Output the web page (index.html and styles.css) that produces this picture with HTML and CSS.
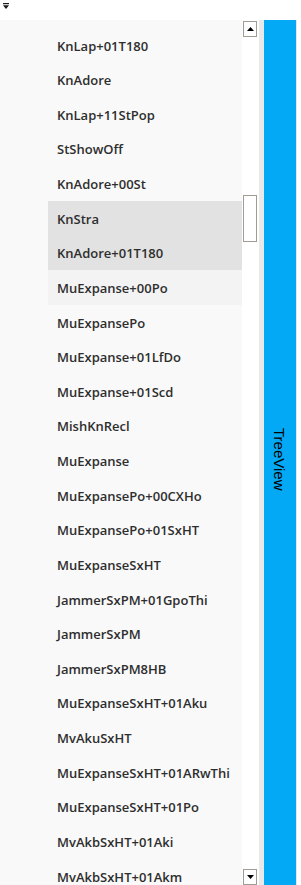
FILE: index.html
```html
<!DOCTYPE html>
<html>
<head>
<meta charset="utf-8">
<link rel="stylesheet" href="styles.css">
</head>
<body>
<div class="topbar">
  <svg class="menu-icon" width="8" height="8" viewBox="0 0 8 8"><rect x="0" y="0" width="6" height="1.2" fill="#1a1a1a"/><polygon points="0,2.2 6,2.2 3,6" fill="#1a1a1a"/></svg>
</div>
<div class="main">
  <div class="list">
    <div class="item">KnLap+01T180</div>
    <div class="item">KnAdore</div>
    <div class="item">KnLap+11StPop</div>
    <div class="item">StShowOff</div>
    <div class="item">KnAdore+00St</div>
    <div class="item selected">KnStra</div>
    <div class="item selected">KnAdore+01T180</div>
    <div class="item hover">MuExpanse+00Po</div>
    <div class="item">MuExpansePo</div>
    <div class="item">MuExpanse+01LfDo</div>
    <div class="item">MuExpanse+01Scd</div>
    <div class="item">MishKnRecl</div>
    <div class="item">MuExpanse</div>
    <div class="item">MuExpansePo+00CXHo</div>
    <div class="item">MuExpansePo+01SxHT</div>
    <div class="item">MuExpanseSxHT</div>
    <div class="item">JammerSxPM+01GpoThi</div>
    <div class="item">JammerSxPM</div>
    <div class="item">JammerSxPM8HB</div>
    <div class="item">MuExpanseSxHT+01Aku</div>
    <div class="item">MvAkuSxHT</div>
    <div class="item">MuExpanseSxHT+01ARwThi</div>
    <div class="item">MuExpanseSxHT+01Po</div>
    <div class="item">MvAkbSxHT+01Aki</div>
    <div class="item">MvAkbSxHT+01Akm</div>
  </div>
  <div class="scrollbar">
    <div class="sb-btn"><svg width="7" height="4" viewBox="0 0 7 4"><polygon points="0,4 7,4 3.5,0" fill="#000"/></svg></div>
    <div class="sb-track">
      <div class="sb-thumb"></div>
    </div>
    <div class="sb-btn"><svg width="7" height="4" viewBox="0 0 7 4"><polygon points="0,0 7,0 3.5,4" fill="#000"/></svg></div>
  </div>
  <div class="gap"></div>
  <div class="panel"><span class="panel-title">TreeView</span></div>
  <div class="edge"></div>
</div>
</body>
</html>
```
FILE: styles.css
```css
html, body {
  margin: 0;
  padding: 0;
  background: #ffffff;
}
body {
  width: 301px;
  height: 885px;
  overflow: hidden;
  font-family: "Open Sans", "Noto Sans", sans-serif;
}
.topbar {
  height: 20px;
  background: #ffffff;
  padding: 3px 0 0 3px;
  box-sizing: border-box;
}
.menu-icon {
  display: block;
}
.main {
  display: flex;
  height: 865px;
}
.list {
  width: 242px;
  background: #f9f9f9;
  overflow: hidden;
  padding-top: 7.6px;
  box-sizing: border-box;
}
.item {
  margin-left: 48px;
  height: 34.625px;
  box-sizing: border-box;
  padding-top: 2px;
  line-height: 32.625px;
  padding-left: 9px;
  font-size: 13px;
  font-weight: 550;
  color: #2e2e2e;
  white-space: nowrap;
}
.item.selected {
  background: #e2e2e2;
}
.item.hover {
  background: #f3f3f3;
}
.scrollbar {
  width: 17px;
  background: #ffffff;
  display: flex;
  flex-direction: column;
  padding: 1px 2px 0 1px;
  box-sizing: border-box;
}
.sb-btn {
  height: 16px;
  border: 1px solid #a09c94;
  box-sizing: border-box;
  display: flex;
  align-items: center;
  justify-content: center;
  background: #ffffff;
}
.sb-track {
  flex: 1;
}
.sb-thumb {
  margin-top: 158px;
  height: 47px;
  border: 1px solid #a09c94;
  box-sizing: border-box;
  background: #ffffff;
}
.gap {
  width: 5px;
  background: #e9e9e9;
}
.panel {
  width: 32px;
  background: #03a9f4;
  display: flex;
  align-items: center;
  justify-content: center;
  padding-top: 13px;
  box-sizing: border-box;
}
.panel-title {
  writing-mode: vertical-rl;
  font-family: "Liberation Sans", Arial, sans-serif;
  font-size: 15px;
  color: #000000;
  margin-right: 1px;
}
.edge {
  width: 5px;
  background: #ffffff;
  border-left: 1px solid #e6e6e6;
  box-sizing: border-box;
}
```
